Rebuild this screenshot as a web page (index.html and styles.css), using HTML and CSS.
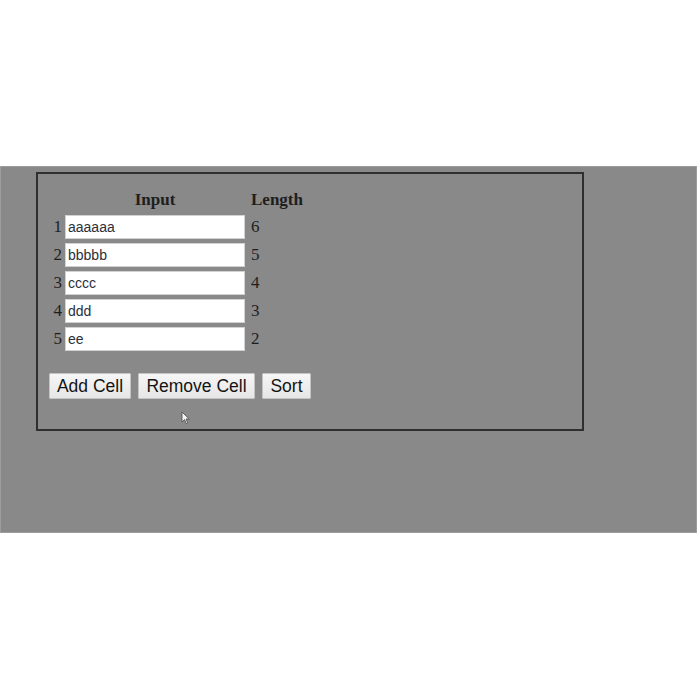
FILE: index.html
```html
<!DOCTYPE html>
<html>
<head>
<meta charset="utf-8">
<link rel="stylesheet" href="styles.css">
</head>
<body>
<div class="stage">
  <div class="panel">
    <div class="grid">
      <div class="hd"></div>
      <div class="hd hd-input">Input</div>
      <div class="hd hd-len">Length</div>

      <div class="num">1</div>
      <div class="cell"><input class="field" type="text" value="aaaaaa"></div>
      <div class="len">6</div>

      <div class="num">2</div>
      <div class="cell"><input class="field" type="text" value="bbbbb"></div>
      <div class="len">5</div>

      <div class="num">3</div>
      <div class="cell"><input class="field" type="text" value="cccc"></div>
      <div class="len">4</div>

      <div class="num">4</div>
      <div class="cell"><input class="field" type="text" value="ddd"></div>
      <div class="len">3</div>

      <div class="num">5</div>
      <div class="cell"><input class="field" type="text" value="ee"></div>
      <div class="len">2</div>
    </div>
    <div class="actions">
      <button class="btn btn-add">Add Cell</button>
      <button class="btn btn-remove">Remove Cell</button>
      <button class="btn btn-sort">Sort</button>
    </div>
    <svg class="cursor" width="9" height="14" viewBox="0 0 9 14">
      <path d="M1 1 L1 11 L3.5 8.6 L5.3 12.6 L6.8 11.9 L5 8 L8.2 8 Z" fill="#f4f4f4" stroke="#555" stroke-width="0.9" stroke-linejoin="round"/>
    </svg>
  </div>
</div>
</body>
</html>
```

FILE: styles.css
```css
html, body {
  margin: 0;
  padding: 0;
  background: #ffffff;
}

.stage {
  margin-top: 166px;
  width: 695px;
  height: 360px;
  background: #898989;
  border: 1px solid #9d9d9d;
  padding-top: 5px;
  box-sizing: content-box;
}

.panel {
  position: relative;
  margin-left: 35px;
  border: 2px solid #2f2f2f;
  padding: 13px 0 0 10px;
  box-sizing: content-box;
  width: 534px;
  height: 242px;
}

.grid {
  display: grid;
  grid-template-columns: 14px 180px auto;
  column-gap: 3px;
  grid-auto-rows: 28px;
  grid-template-rows: 26px;
  font-family: "Liberation Serif", "Times New Roman", serif;
  font-size: 17px;
  color: #1e1e1e;
}

.grid > div {
  display: flex;
  align-items: center;
}

.hd {
  font-weight: bold;
}

.hd-input {
  justify-content: center;
}

.hd-len,
.len {
  padding-left: 3px;
}

.num {
  justify-content: flex-end;
}

.field {
  box-sizing: border-box;
  width: 180px;
  height: 24px;
  margin: 0;
  padding: 0 2px;
  border: 1px solid #d2d2d2;
  background: #ffffff;
  font-family: "Liberation Sans", Arial, sans-serif;
  font-size: 14px;
  color: #2a2f3a;
  outline: none;
}

.actions {
  display: flex;
  gap: 7px;
  margin-top: 20px;
  margin-left: 1px;
}

.btn {
  box-sizing: border-box;
  height: 26px;
  margin: 0;
  padding: 0;
  border: 1px solid #c4c4c4;
  border-radius: 1px;
  background: linear-gradient(#f6f6f6, #e6e6e6);
  font-family: "Liberation Sans", Arial, sans-serif;
  font-size: 17.5px;
  color: #141414;
  line-height: 24px;
  white-space: nowrap;
  text-align: center;
}

.btn-add { width: 82px; }
.btn-remove { width: 117px; }
.btn-sort { width: 49px; }

.cursor {
  position: absolute;
  left: 143px;
  top: 237px;
}
```
